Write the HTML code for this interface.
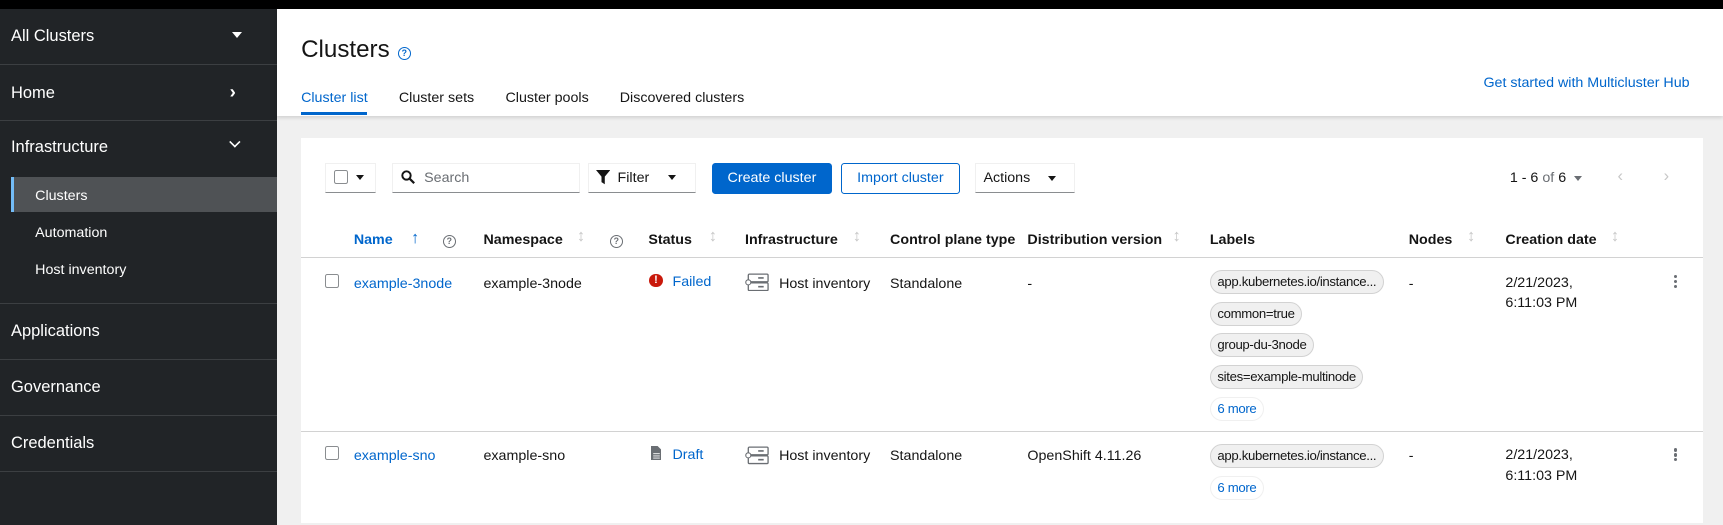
<!DOCTYPE html>
<html><head><meta charset="utf-8"><style>
html,body{margin:0;padding:0;}
body{width:1568px;height:470px;overflow:hidden;zoom:1.09885;font-family:"Liberation Sans",sans-serif;font-size:13px;color:#151515;background:#f0f0f0;position:relative;}
.a{position:absolute;white-space:nowrap;}
#top{left:0;top:0;width:1568px;height:8px;background:#000;}
#side{left:0;top:8px;width:252px;height:470px;background:#212427;color:#fff;}
.sep{position:absolute;left:0;width:252px;height:1px;background:#3c3f42;}
.nav{position:absolute;left:10px;font-size:15px;color:#fff;}
.sub{position:absolute;left:32px;font-size:13px;color:#fff;}
#hdr{left:252px;top:8px;width:1316px;height:98px;background:#fff;box-shadow:0 2px 3px rgba(0,0,0,.12);}
.blue{color:#06c;}
.card{left:274px;top:126px;width:1276px;height:350px;background:#fff;}
.box{position:absolute;border:1px solid #f0f0f0;border-bottom:1px solid #8a8d90;height:28px;box-sizing:border-box;}
.th{font-weight:bold;font-size:13px;}
.sort{color:#c7c7c7;font-size:15px;font-weight:bold;}
.chip{position:absolute;left:1101px;height:20px;line-height:20px;padding:0 6px;border:1px solid #d2d2d2;border-radius:12px;background:#f0f0f0;font-size:12px;letter-spacing:-0.3px;}
.more{background:#fff;border-color:#f0f0f0;color:#06c;}
.cb{position:absolute;width:11px;height:11px;border:1px solid #8a8d90;border-radius:2px;background:#fff;}
.help{display:inline-block;width:10px;height:10px;border:1.3px solid #6a6e73;border-radius:50%;font-size:8px;line-height:10px;text-align:center;color:#6a6e73;font-weight:bold;}
.line{position:absolute;left:0;width:1276px;height:1px;background:#d2d2d2;}
.keb{position:absolute;width:3px;}
.keb i{display:block;width:3px;height:3px;border-radius:50%;background:#6a6e73;margin-bottom:1.5px;}
</style></head><body>
<div class="a" id="top"></div>
<div class="a" id="side">
 <div class="nav" style="top:17px">All Clusters</div><div class="a" style="left:211px;top:21px;border:5px solid transparent;border-top:6px solid #fff;border-bottom:0"></div>
 <div class="sep" style="top:50px"></div>
 <div class="nav" style="top:68px">Home</div><div class="a" style="left:209px;top:66px;font-size:17px;font-weight:bold">&#8250;</div>
 <div class="sep" style="top:101px"></div>
 <div class="nav" style="top:118px">Infrastructure</div><div class="a" style="left:209px;top:117px;width:7px;height:7px;border-right:2px solid #fff;border-bottom:2px solid #fff;transform:rotate(45deg) scale(.8)"></div>
 <div class="a" style="left:10px;top:153px;width:242px;height:32px;background:#4f5255;border-left:3px solid #73bcf7;box-sizing:border-box"></div>
 <div class="sub" style="top:163px">Clusters</div>
 <div class="sub" style="top:197px">Automation</div>
 <div class="sub" style="top:230px">Host inventory</div>
 <div class="sep" style="top:268px"></div>
 <div class="nav" style="top:285px">Applications</div>
 <div class="sep" style="top:319px"></div>
 <div class="nav" style="top:336px">Governance</div>
 <div class="sep" style="top:370px"></div>
 <div class="nav" style="top:387px">Credentials</div>
 <div class="sep" style="top:421px"></div>
</div>
<div class="a" id="hdr"></div>
<div class="a" style="left:274px;top:33px;font-size:22px">Clusters</div>
<div class="a" style="left:362px;top:40px"><span class="help" style="border-color:#06c;color:#06c">?</span></div>
<div class="a blue" style="left:274px;top:82px">Cluster list</div>
<div class="a" style="left:274px;top:102px;width:60px;height:3px;background:#06c"></div>
<div class="a" style="left:363px;top:82px">Cluster sets</div>
<div class="a" style="left:460px;top:82px">Cluster pools</div>
<div class="a" style="left:564px;top:82px">Discovered clusters</div>
<div class="a blue" style="left:1350px;top:68px">Get started with Multicluster Hub</div>

<div class="a card">
 <div class="box" style="left:22px;top:22px;width:46px"></div>
 <div class="cb" style="left:30px;top:29px"></div>
 <div class="a" style="left:50px;top:33px;border:4px solid transparent;border-top:5px solid #151515;border-bottom:0"></div>
 <div class="box" style="left:83px;top:22px;width:171px"></div>
 <svg class="a" style="left:91px;top:29px" width="13" height="13" viewBox="0 0 13 13"><circle cx="5" cy="5" r="3.8" fill="none" stroke="#151515" stroke-width="1.8"/><path d="M8 8l4 4" stroke="#151515" stroke-width="2"/></svg>
 <div class="a" style="left:112px;top:29px;color:#6a6e73">Search</div>
 <div class="box" style="left:261px;top:22px;width:98px"></div>
 <svg class="a" style="left:268px;top:29px" width="13" height="13" viewBox="0 0 13 13"><path d="M0 0h13L8 6v7L5 11V6z" fill="#151515"/></svg>
 <div class="a" style="left:288px;top:29px">Filter</div>
 <div class="a" style="left:334px;top:33px;border:4px solid transparent;border-top:5px solid #151515;border-bottom:0"></div>
 <div class="a" style="left:374px;top:22px;width:109px;height:29px;background:#06c;border-radius:3px;color:#fff;text-align:center;line-height:29px">Create cluster</div>
 <div class="a" style="left:491px;top:22px;width:107px;height:27px;border:1px solid #06c;border-radius:3px;color:#06c;text-align:center;line-height:27px">Import cluster</div>
 <div class="box" style="left:613px;top:22px;width:91px"></div>
 <div class="a" style="left:621px;top:29px">Actions</div>
 <div class="a" style="left:680px;top:34px;border:4px solid transparent;border-top:5px solid #151515;border-bottom:0"></div>
 <div class="a" style="left:1100px;top:29px">1 - 6 <span style="color:#6a6e73">of</span> 6</div>
 <div class="a" style="left:1158px;top:34px;border:4px solid transparent;border-top:5px solid #6a6e73;border-bottom:0"></div>
 <div class="a" style="left:1198px;top:26px;color:#c7c7c7;font-size:15px">&#8249;</div>
 <div class="a" style="left:1240px;top:26px;color:#c7c7c7;font-size:15px">&#8250;</div>

 <div class="a th blue" style="left:48px;top:85px">Name</div>
 <div class="a blue" style="left:100px;top:82px;font-weight:bold;font-size:15px">&#8593;</div>
 <div class="a" style="left:129px;top:85px"><span class="help">?</span></div>
 <div class="a th" style="left:166px;top:85px">Namespace</div><div class="a sort" style="left:251px;top:81px">&#8597;</div>
 <div class="a" style="left:281px;top:85px"><span class="help">?</span></div>
 <div class="a th" style="left:316px;top:85px">Status</div><div class="a sort" style="left:371px;top:81px">&#8597;</div>
 <div class="a th" style="left:404px;top:85px">Infrastructure</div><div class="a sort" style="left:502px;top:81px">&#8597;</div>
 <div class="a th" style="left:536px;top:85px">Control plane type</div>
 <div class="a th" style="left:661px;top:85px">Distribution version</div><div class="a sort" style="left:793px;top:81px">&#8597;</div>
 <div class="a th" style="left:827px;top:85px">Labels</div>
 <div class="a th" style="left:1008px;top:85px">Nodes</div><div class="a sort" style="left:1061px;top:81px">&#8597;</div>
 <div class="a th" style="left:1096px;top:85px">Creation date</div><div class="a sort" style="left:1192px;top:81px">&#8597;</div>
 <div class="line" style="top:108px"></div>

 <div class="cb" style="left:22px;top:123px"></div>
 <div class="a blue" style="left:48px;top:125px">example-3node</div>
 <div class="a" style="left:166px;top:125px">example-3node</div>
 <div class="a" style="left:317px;top:123px;width:12px;height:12px;border-radius:50%;background:#c9190b;color:#fff;font-size:10px;font-weight:bold;text-align:center;line-height:12px">!</div>
 <div class="a blue" style="left:338px;top:123px">Failed</div>
 <svg class="a" style="left:404px;top:122px" width="22" height="17" viewBox="0 0 22 17"><rect x="3" y="1" width="18" height="7" rx="1" fill="none" stroke="#6a6e73" stroke-width="1.2"/><rect x="3" y="9" width="18" height="7" rx="1" fill="none" stroke="#6a6e73" stroke-width="1.2"/><circle cx="3" cy="8.5" r="2.3" fill="#fff" stroke="#6a6e73"/><path d="M12 4.5h5M12 12.5h5" stroke="#6a6e73" stroke-width="1.5"/></svg>
 <div class="a" style="left:435px;top:125px">Host inventory</div>
 <div class="a" style="left:536px;top:125px">Standalone</div>
 <div class="a" style="left:661px;top:125px">-</div>
 <div class="chip" style="top:120px;left:827px">app.kubernetes.io/instance...</div>
 <div class="chip" style="top:149px;left:827px">common=true</div>
 <div class="chip" style="top:177px;left:827px">group-du-3node</div>
 <div class="chip" style="top:206px;left:827px">sites=example-multinode</div>
 <div class="chip more" style="top:235px;left:827px">6 more</div>
 <div class="a" style="left:1008px;top:125px">-</div>
 <div class="a" style="left:1096px;top:122px;line-height:19px">2/21/2023,<br>6:11:03 PM</div>
 <div class="keb" style="left:1249px;top:124px"><i></i><i></i><i></i></div>
 <div class="line" style="top:266px"></div>

 <div class="cb" style="left:22px;top:280px"></div>
 <div class="a blue" style="left:48px;top:282px">example-sno</div>
 <div class="a" style="left:166px;top:282px">example-sno</div>
 <svg class="a" style="left:318px;top:280px" width="10" height="13" viewBox="0 0 10 13"><path d="M0 0h6l4 4v9H0z" fill="#6a6e73"/><path d="M2 7h6M2 9h6M2 11h6" stroke="#fff" stroke-width=".8"/></svg>
 <div class="a blue" style="left:338px;top:281px">Draft</div>
 <svg class="a" style="left:404px;top:280px" width="22" height="17" viewBox="0 0 22 17"><rect x="3" y="1" width="18" height="7" rx="1" fill="none" stroke="#6a6e73" stroke-width="1.2"/><rect x="3" y="9" width="18" height="7" rx="1" fill="none" stroke="#6a6e73" stroke-width="1.2"/><circle cx="3" cy="8.5" r="2.3" fill="#fff" stroke="#6a6e73"/><path d="M12 4.5h5M12 12.5h5" stroke="#6a6e73" stroke-width="1.5"/></svg>
 <div class="a" style="left:435px;top:282px">Host inventory</div>
 <div class="a" style="left:536px;top:282px">Standalone</div>
 <div class="a" style="left:661px;top:282px">OpenShift 4.11.26</div>
 <div class="chip" style="top:278px;left:827px">app.kubernetes.io/instance...</div>
 <div class="chip more" style="top:307px;left:827px">6 more</div>
 <div class="a" style="left:1008px;top:282px">-</div>
 <div class="a" style="left:1096px;top:279px;line-height:19px">2/21/2023,<br>6:11:03 PM</div>
 <div class="keb" style="left:1249px;top:282px"><i></i><i></i><i></i></div>
</div>
</body></html>
